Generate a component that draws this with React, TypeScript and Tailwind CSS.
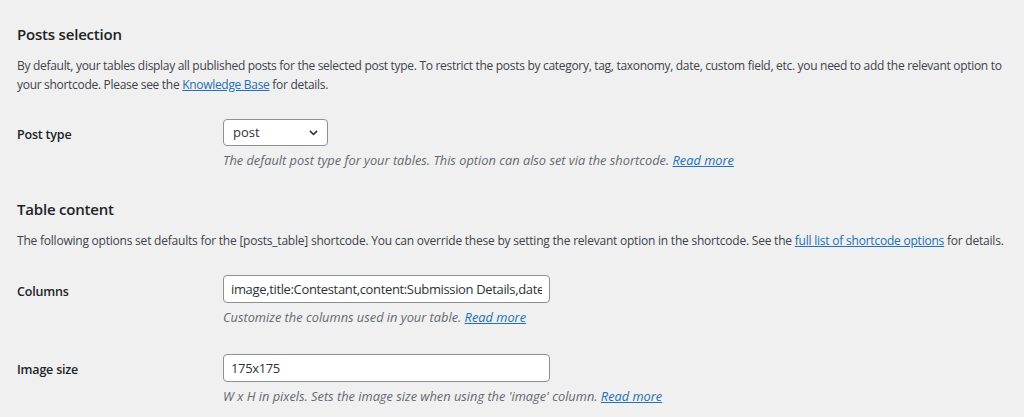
export default function App() {
  const font = { fontFamily: '"Open Sans", "Noto Sans", sans-serif' };
  return (
    <div className="min-h-screen w-full bg-[#f0f0f1] px-[17px] pt-[24px] text-[#3c434a]" style={font}>
      <h2 className="text-[15px] font-semibold leading-[20px] tracking-[-0.2px] text-[#1d2327]">Posts selection</h2>
      <p className="mt-[12px] text-[12px] leading-[19px] tracking-[-0.3px]">
        By default, your tables display all published posts for the selected post type. To restrict the posts by category, tag, taxonomy, date, custom field, etc. you need to add the relevant option to your shortcode. Please see the{' '}
        <a href="#" className="text-[#2271b1] underline">Knowledge Base</a> for details.
      </p>

      <div className="mt-[25px] grid grid-cols-[206px_1fr]">
        <label className="pt-[6px] text-[12.5px] font-semibold leading-[20px] tracking-[-0.2px] text-[#1d2327]">Post type</label>
        <div>
          <div className="flex h-[27px] w-[105px] items-center justify-between rounded-[4px] border border-[#8c8f94] bg-white pl-[9px] pr-[7px] text-[13px] text-[#2c3338]">
            <span>post</span>
            <svg width="13" height="13" viewBox="0 0 20 20" fill="none" stroke="#2c3338" strokeWidth="2.4">
              <path d="M4.5 7.5l5.5 5.5 5.5-5.5" />
            </svg>
          </div>
          <p className="mt-[5px] text-[12.8px] italic leading-[18px] text-[#646970]">
            The default post type for your tables. This option can also set via the shortcode.{' '}
            <a href="#" className="text-[#2271b1] underline">Read more</a>
          </p>
        </div>
      </div>

      <h2 className="mt-[30px] text-[15px] font-semibold leading-[20px] tracking-[-0.2px] text-[#1d2327]">Table content</h2>
      <p className="mt-[12px] text-[12px] leading-[19px] tracking-[-0.22px]">
        The following options set defaults for the [posts_table] shortcode. You can override these by setting the relevant option in the shortcode. See the{' '}
        <a href="#" className="text-[#2271b1] underline">full list of shortcode options</a> for details.
      </p>

      <div className="mt-[25px] grid grid-cols-[206px_1fr]">
        <label className="pt-[7px] text-[12.5px] font-semibold leading-[20px] tracking-[-0.2px] text-[#1d2327]">Columns</label>
        <div>
          <input
            readOnly
            value="image,title:Contestant,content:Submission Details,date"
            className="h-[28px] w-[327px] rounded-[4px] border border-[#8c8f94] bg-white px-[7px] text-[13px] tracking-[-0.35px] text-[#2c3338] outline-none"
            style={font}
          />
          <p className="mt-[5px] text-[12.8px] italic leading-[18px] text-[#646970]">
            Customize the columns used in your table.{' '}
            <a href="#" className="text-[#2271b1] underline">Read more</a>
          </p>
        </div>
      </div>

      <div className="mt-[28px] grid grid-cols-[206px_1fr]">
        <label className="pt-[6px] text-[12.5px] font-semibold leading-[20px] tracking-[-0.2px] text-[#1d2327]">Image size</label>
        <div>
          <input
            readOnly
            value="175x175"
            className="h-[28px] w-[327px] rounded-[4px] border border-[#8c8f94] bg-white px-[7px] text-[13px] tracking-[-0.35px] text-[#2c3338] outline-none"
            style={font}
          />
          <p className="mt-[5px] text-[12.8px] italic leading-[18px] text-[#646970]">
            W x H in pixels. Sets the image size when using the 'image' column.{' '}
            <a href="#" className="text-[#2271b1] underline">Read more</a>
          </p>
        </div>
      </div>
    </div>
  );
}
